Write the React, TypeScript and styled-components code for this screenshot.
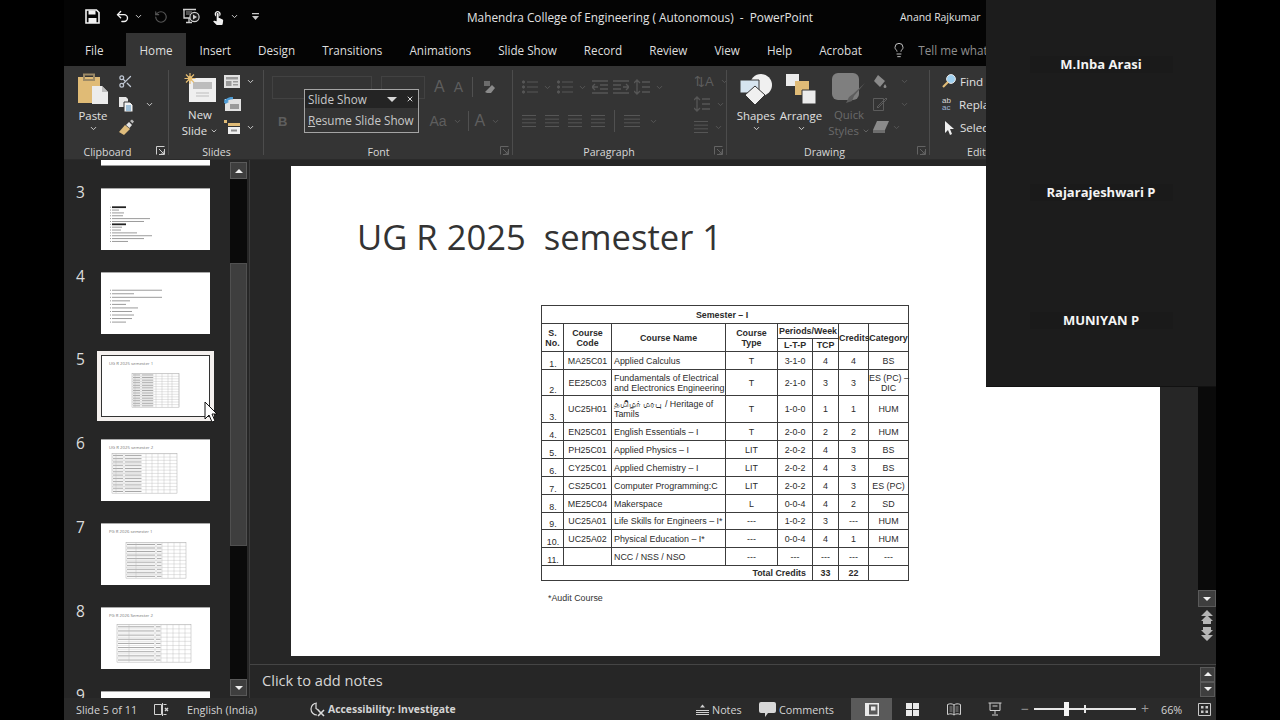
import { FC, ReactNode } from "react";
import styled, { createGlobalStyle } from "styled-components";
import { ChevronDown, Lightbulb, Scissors, Undo2, RotateCcw, X } from "lucide-react";
import { MdTouchApp } from "react-icons/md";

const UI_FONT = `"Open Sans", "Noto Sans", "Liberation Sans", sans-serif`;

const GlobalStyle = createGlobalStyle`
	html, body {
		margin: 0;
		padding: 0;
		background: #000;
		overflow: hidden;
	}
	* { box-sizing: border-box; }
`;

const Page = styled.div`
	position: relative;
	width: 1280px;
	height: 720px;
	padding: 0 64px;
	background: #000;
	overflow: hidden;
	font-family: ${UI_FONT};
	color: #e6e6e6;
`;

const AppWindow = styled.div`
	display: flex;
	flex-direction: column;
	width: 1152px;
	height: 720px;
	background: #262626;
`;

/* title bar */
const TitleBar = styled.div`
	display: flex;
	align-items: center;
	height: 33px;
	flex: none;
	padding-left: 21px;
	background: #040404;
`;

const Qat = styled.div`
	display: flex;
	align-items: center;
	width: 382px;
	flex: none;
`;

const QatSlot = styled.span<{ $w: number }>`
	display: inline-flex;
	align-items: center;
	width: ${p => p.$w}px;
	flex: none;
`;

const DocTitle = styled.div`
	width: 433px;
	flex: none;
	white-space: pre;
	font-size: 11.8px;
	color: #e2e2e2;
`;

const UserName = styled.div`
	font-size: 10.4px;
	color: #e2e2e2;
	white-space: nowrap;
`;

/* tab row */
const TabRow = styled.div`
	display: flex;
	align-items: stretch;
	height: 33px;
	flex: none;
	padding-left: 7.5px;
	background: #040404;
`;

const Tab = styled.div<{ $active?: boolean }>`
	display: flex;
	align-items: center;
	padding: 0 13.5px;
	margin-left: ${p => (p.$active ? "9px" : "0")};
	background: ${p => (p.$active ? "#343434" : "transparent")};
	font-size: 11.7px;
	color: #dedede;
	white-space: nowrap;
`;

const TellMe = styled.div`
	display: flex;
	align-items: center;
	gap: 11px;
	margin-left: 16px;
	font-size: 11.7px;
	color: #8f8f8f;
	white-space: nowrap;
`;

/* ribbon */
const Ribbon = styled.div`
	display: flex;
	height: 94px;
	flex: none;
	background: #343434;
	border-bottom: 1px solid #2a2a2a;
`;

const Group = styled.div<{ $w: number }>`
	position: relative;
	display: flex;
	flex-direction: column;
	width: ${p => p.$w}px;
	flex: none;
	&::after {
		content: "";
		position: absolute;
		right: 0;
		top: 4px;
		bottom: 4px;
		width: 1px;
		background: #4c4c4c;
	}
`;

const GroupBody = styled.div<{ $pl?: number }>`
	display: flex;
	flex: 1;
	padding-left: ${p => p.$pl ?? 0}px;
	min-height: 0;
`;

const GroupLabel = styled.div<{ $pr?: number; $pl?: number }>`
	height: 20px;
	flex: none;
	padding: 5px ${p => p.$pr ?? 0}px 0 ${p => p.$pl ?? 0}px;
	text-align: ${p => (p.$pl ? "left" : "center")};
	font-size: 10.6px;
	line-height: 16px;
	color: #d8d8d8;
`;

const Launcher = styled.svg<{ $dim?: boolean }>`
	position: absolute;
	right: 4px;
	bottom: 4px;
	width: 9px;
	height: 9px;
	opacity: ${p => (p.$dim ? 0.3 : 1)};
`;

const BigButton = styled.div<{ $w: number; $dim?: boolean }>`
	display: flex;
	flex-direction: column;
	align-items: center;
	width: ${p => p.$w}px;
	flex: none;
	padding-top: 6px;
	font-size: 11.4px;
	line-height: 16px;
	color: ${p => (p.$dim ? "#6a6a6a" : "#e0e0e0")};
	text-align: center;
	white-space: nowrap;
`;

const BigIcon = styled.div`
	height: 33px;
	margin-bottom: 3px;
	display: flex;
	align-items: center;
	justify-content: center;
`;

const SmallCol = styled.div<{ $w?: number; $pl?: number; $ml?: number }>`
	display: flex;
	flex-direction: column;
	justify-content: space-between;
	width: ${p => (p.$w ? `${p.$w}px` : "auto")};
	padding: 5px 0 2px ${p => p.$pl ?? 0}px;
	margin-left: ${p => p.$ml ?? 0}px;
	flex: none;
`;

const SmallRow = styled.div<{ $gap?: number }>`
	display: flex;
	align-items: center;
	gap: ${p => p.$gap ?? 3}px;
	height: 20px;
	font-size: 11.6px;
	color: #e0e0e0;
	white-space: nowrap;
`;

const FaintRow = styled.div<{ $gap?: number; $h?: number }>`
	display: flex;
	align-items: center;
	gap: ${p => p.$gap ?? 8}px;
	height: ${p => p.$h ?? 24}px;
	color: #5c5c5c;
`;

const FaintCol = styled.div<{ $w: number }>`
	display: flex;
	flex-direction: column;
	gap: 10px;
	width: ${p => p.$w}px;
	padding-top: 9px;
	flex: none;
`;

const FontBox = styled.div<{ $w: number }>`
	height: 23px;
	width: ${p => p.$w}px;
	border: 1px solid #424242;
	flex: none;
`;

const FaintText = styled.span<{ $size: number; $bold?: boolean }>`
	font-family: "Liberation Sans", sans-serif;
	font-size: ${p => p.$size}px;
	font-weight: ${p => (p.$bold ? 700 : 400)};
	color: #5e5e5e;
`;

const VRule = styled.span<{ $h: number }>`
	width: 1px;
	height: ${p => p.$h}px;
	background: #505050;
	flex: none;
`;

const Spacer = styled.span<{ $w: number }>`
	width: ${p => p.$w}px;
	flex: none;
`;

/* floating slide show toolbar */
const FloatBar = styled.div`
	position: absolute;
	left: 304px;
	top: 89px;
	width: 115px;
	height: 44px;
	background: #343434;
	border: 1px solid #a4a4a4;
	color: #c8c8c8;
	font-size: 11.7px;
`;

const FloatHead = styled.div`
	display: flex;
	align-items: center;
	height: 18px;
	padding: 0 4px 0 3px;
	background: #242424;
`;

const FloatTitle = styled.span`
	flex: 1;
`;

const FloatCaret = styled.span`
	width: 0;
	height: 0;
	margin-right: 9px;
	border-left: 5px solid transparent;
	border-right: 5px solid transparent;
	border-top: 5px solid #d8d8d8;
`;

const FloatItem = styled.div`
	padding: 4px 0 0 3px;
	white-space: nowrap;
	& u { text-underline-offset: 1px; }
`;

/* workspace */
const Workspace = styled.div`
	display: flex;
	flex: 1;
	min-height: 0;
`;

const ThumbPane = styled.div`
	display: flex;
	width: 186px;
	flex: none;
	background: #262626;
	border-right: 1px solid #3c3c3c;
`;

const ThumbList = styled.div`
	position: relative;
	flex: 1;
	overflow: hidden;
	display: flex;
	flex-direction: column;
	gap: 21.8px;
`;

const ThumbRow = styled.div`
	position: relative;
	display: flex;
	flex: none;
	height: 62px;
	padding-left: 12px;
`;

const ThumbNo = styled.div`
	width: 25px;
	flex: none;
	margin-top: -6px;
	font-size: 15.5px;
	line-height: 20px;
	color: #dcdcdc;
`;

const Thumb = styled.div<{ $selected?: boolean }>`
	position: relative;
	width: 109px;
	height: 62px;
	flex: none;
	background: #fff;
	border-top: 1px solid ${p => (p.$selected ? "#333" : "#a8a8a8")};
	outline: ${p => (p.$selected ? "1px solid #333" : "none")};
	outline-offset: -1px;
	box-shadow: ${p => (p.$selected ? "0 0 0 4px #f4f0ee" : "none")};
`;

const ThumbSvg = styled.svg`
	display: block;
	width: 100%;
	height: 100%;
`;

const PartialThumb = styled.div`
	width: 109px;
	height: 6px;
	margin-left: 37px;
	background: #fff;
	border-bottom: 1px solid #999;
	flex: none;
`;

const Cursor = styled.svg`
	position: absolute;
	left: 140px;
	top: 46px;
	width: 14px;
	height: 22px;
`;

const ScrollButton = styled.div<{ $up?: boolean }>`
	display: flex;
	align-items: center;
	justify-content: center;
	height: 17px;
	flex: none;
	background: #3e3e3e;
	border: 1px solid #5a5a5a;
	&::before {
		content: "";
		border-left: 4px solid transparent;
		border-right: 4px solid transparent;
		${p => (p.$up ? "border-bottom" : "border-top")}: 4px solid #f0f0f0;
	}
`;

const ScrollTrack = styled.div<{ $h?: number }>`
	height: ${p => (p.$h ? `${p.$h}px` : "auto")};
	flex: ${p => (p.$h ? "none" : "1")};
	background: #0a0a0a;
`;

const ScrollThumb = styled.div<{ $h: number }>`
	height: ${p => p.$h}px;
	flex: none;
	background: #3e3e3e;
	border: 1px solid #505050;
`;

const ThumbScrollWrap = styled.div`
	display: flex;
	flex-direction: column;
	width: 17px;
	margin: 2px 2px 2px 0;
	flex: none;
`;

const MainColumn = styled.div`
	display: flex;
	flex-direction: column;
	flex: 1;
	min-width: 0;
`;

const EditorRow = styled.div`
	display: flex;
	flex: 1;
	min-height: 0;
`;

const Editor = styled.div`
	flex: 1;
	padding: 6px 0 0 41px;
`;

const Slide = styled.div`
	width: 869px;
	height: 490px;
	background: #fff;
	padding: 47px 0 0 66px;
`;

const SlideTitle = styled.h1`
	margin: 0;
	font-family: "Open Sans", sans-serif;
	font-weight: 400;
	font-size: 34.6px;
	line-height: 48px;
	color: #333;
	white-space: pre;
`;

const TableWrap = styled.div`
	margin: 44px 0 0 184px;
	width: 367px;
`;

const CourseTable = styled.table`
	border-collapse: collapse;
	table-layout: fixed;
	width: 367px;
	font-family: "Liberation Sans", sans-serif;
	font-size: 8.9px;
	line-height: 10px;
	color: #2b2b2b;
`;

const TableCol = styled.col<{ $w: number }>`
	width: ${p => p.$w}px;
`;

const TableRow = styled.tr<{ $h: number }>`
	height: ${p => p.$h}px;
`;

const Cell = styled.td<{ $bold?: boolean; $left?: boolean; $no?: boolean; $right?: boolean; $pr?: number }>`
	border: 1px solid #3c3c3c;
	padding: ${p => (p.$no ? "0 0 0 1px" : p.$left ? "0 0 0 2px" : p.$right ? "0 6px 0 0" : `0 ${p.$pr ?? 0}px 0 0`)};
	text-align: ${p => (p.$left ? "left" : p.$right ? "right" : "center")};
	vertical-align: ${p => (p.$no ? "bottom" : "middle")};
	font-weight: ${p => (p.$bold ? 700 : 400)};
	overflow: visible;
	white-space: nowrap;
`;

const AuditNote = styled.div`
	margin: 12px 0 0 7px;
	font-family: "Liberation Sans", sans-serif;
	font-size: 8.9px;
	color: #333;
`;

const EditorScroll = styled.div`
	display: flex;
	flex-direction: column;
	width: 18px;
	padding-bottom: 23px;
	flex: none;
`;

const StepArrow = styled.svg`
	display: block;
	width: 14px;
	height: 14px;
	margin: 3px 0 0 2px;
	flex: none;
`;

const NotesBar = styled.div`
	display: flex;
	align-items: center;
	height: 34px;
	flex: none;
	padding-left: 12px;
	border-top: 1px solid #454545;
	font-size: 14.6px;
	color: #d6d6d6;
`;

const NotesText = styled.div`
	flex: 1;
	padding-bottom: 4px;
`;

const NotesScroll = styled.div`
	display: flex;
	flex-direction: column;
	width: 15px;
	margin-right: 1px;
	flex: none;
	& > div { height: 15px; }
`;

/* status bar */
const StatusBar = styled.div`
	display: flex;
	align-items: center;
	height: 22px;
	flex: none;
	background: #2a2a2a;
	font-size: 10.8px;
	color: #d4d4d4;
	white-space: nowrap;
`;

const StatusItem = styled.div<{ $w: number; $bold?: boolean; $gap?: number; $ml?: number }>`
	display: flex;
	align-items: center;
	gap: ${p => p.$gap ?? 3}px;
	width: ${p => p.$w}px;
	margin-left: ${p => p.$ml ?? 0}px;
	flex: none;
	font-size: ${p => (p.$bold ? "10.4px" : "inherit")};
	font-weight: ${p => (p.$bold ? 700 : 400)};
`;

const ViewButton = styled.div<{ $active?: boolean }>`
	display: flex;
	align-items: center;
	justify-content: center;
	width: 41px;
	height: 22px;
	flex: none;
	background: ${p => (p.$active ? "#5a5a5a" : "transparent")};
`;

const ZoomSlider = styled.div`
	position: relative;
	width: 102px;
	height: 2px;
	margin: 0 4px;
	background: #e6e6e6;
	flex: none;
`;

const ZoomMark = styled.span`
	position: absolute;
	left: 50px;
	top: -3px;
	width: 2px;
	height: 8px;
	background: #e6e6e6;
`;

const ZoomKnob = styled.span`
	position: absolute;
	left: 30px;
	top: -6px;
	width: 5px;
	height: 14px;
	background: #f4f4f4;
`;

const ZoomSign = styled.span<{ $ml?: number }>`
	width: 10px;
	margin-left: ${p => p.$ml ?? 0}px;
	font-size: 14px;
	line-height: 14px;
	color: #9a9a9a;
	text-align: center;
	flex: none;
`;

/* meeting panel over the window */
const ParticipantPanel = styled.div`
	position: absolute;
	left: 986px;
	top: 0;
	width: 230px;
	height: 387px;
	display: flex;
	flex-direction: column;
	padding-bottom: 2px;
	background: #1c1c1c;
	border-bottom: 1px solid #111;
`;

const ParticipantTile = styled.div`
	display: flex;
	flex: 1;
	align-items: center;
	justify-content: center;
`;

const ParticipantName = styled.div`
	width: 143px;
	height: 17px;
	line-height: 17px;
	background: #1a1a1a;
	text-align: center;
	font-size: 13px;
	font-weight: 700;
	color: #f4f4f4;
	white-space: nowrap;
`;

const IndentSvg = styled.svg<{ $flip?: boolean }>`
	transform: ${p => (p.$flip ? "scaleX(-1)" : "none")};
`;

const ReplaceGlyph = styled.span`
	display: inline-block;
	width: 14px;
	font-family: "Liberation Sans", sans-serif;
	font-size: 8px;
	line-height: 7px;
	color: #d8d8d8;
	& i { color: #9fb6d8; font-style: normal; }
`;

const Chevron: FC<{ color?: string; size?: number }> = ({ color = "#cfcfcf", size = 9 }) => (
	<ChevronDown size={size} color={color} strokeWidth={2.6} />
);

const DIM = "#565656";

const LauncherIcon: FC<{ dim?: boolean }> = ({ dim }) => (
	<Launcher $dim={dim} viewBox="0 0 9 9" fill="none" stroke="#cfcfcf">
		<path d="M.5 8.500v-8h8M8.500 3v5.500H3M3 3l5 5M5 8h3V5" />
	</Launcher>
);

const LinesIcon: FC<{ w?: number; rows?: number }> = ({ w = 14, rows = 4 }) => (
	<svg width={w} height={14} viewBox={`0 0 ${w} 14`} stroke={DIM}>
		{Array.from({ length: rows }).map((_, i) => (
			<path key={i} d={`M0 ${1.5 + (i * 11) / (rows - 1)}H${w}`} />
		))}
	</svg>
);

const ListIcon: FC = () => (
	<svg width={16} height={14} viewBox="0 0 16 14" fill={DIM} stroke={DIM}>
		<circle cx="1.500" cy="2" r="1.200" />
		<circle cx="1.500" cy="7" r="1.200" />
		<circle cx="1.500" cy="12" r="1.200" />
		<path d="M5 2h11M5 7h11M5 12h11" />
	</svg>
);

const IndentIcon: FC<{ flip?: boolean }> = ({ flip }) => (
	<IndentSvg $flip={flip} width={16} height={14} viewBox="0 0 16 14" fill="none" stroke={DIM}>
		<path d="M0 1h16M8 5h8M8 9h8M0 13h16M6 7H0M3 4 0 7l3 3" strokeWidth="1.300" />
	</IndentSvg>
);

const SpacingIcon: FC = () => (
	<svg width={16} height={16} viewBox="0 0 16 16" fill="none" stroke={DIM} strokeWidth="1.300">
		<path d="M3 1v14M0 4l3-3 3 3M0 12l3 3 3-3M8 3h8M8 8h8M8 13h8" />
	</svg>
);

const EraserIcon: FC = () => (
	<svg width={14} height={14} viewBox="0 0 14 14">
		<path d="M2 1h6v5H2z" fill="#6b6b6b" />
		<path d="M3 12 10 5l3 3-4 5H5z" fill="#8a8a8a" />
	</svg>
);

const SaveIcon: FC = () => (
	<svg width={15} height={15} viewBox="0 0 15 15">
		<path d="M1 1h10.500L14 3.500V14H1z" fill="none" stroke="#f2f2f2" strokeWidth="1.600" />
		<path d="M3.500 1.500h7v4h-7z" fill="#f2f2f2" />
		<path d="M3.500 9h8v5h-8z" fill="#f2f2f2" />
	</svg>
);

const ShowFromStart: FC = () => (
	<svg width={18} height={18} viewBox="0 0 18 18" fill="none" stroke="#d0d0d0">
		<path d="M1 1.500h13M2 1.500V10h6M7 10v4M4 14.500h6" strokeWidth="1.300" />
		<path d="M4 4h6M4 6h4" stroke="#9a9a9a" />
		<circle cx="12.500" cy="9" r="4.600" fill="#1a1a1a" strokeWidth="1.200" />
		<path d="M11 6.500v5l4-2.500z" fill="#d0d0d0" stroke="none" />
	</svg>
);

const QatMoreIcon: FC = () => (
	<svg width={7} height={8} viewBox="0 0 7 8" fill="#c8c8c8">
		<path d="M0 0h7v1.200H0zM0 3h7L3.500 7z" />
	</svg>
);

const PasteIcon: FC = () => (
	<svg width={32} height={32} viewBox="0 0 32 32">
		<path d="M1 4h22v26H1z" fill="#e0bb76" />
		<path d="M7 1.500h10V7H7z" fill="none" stroke="#9d8a66" strokeWidth="2" />
		<path d="M15 13h10l6 6v12H15z" fill="#ececec" />
		<path d="M25 13v6h6z" fill="#bdbdbd" />
	</svg>
);

const CopyIcon: FC = () => (
	<svg width={16} height={16} viewBox="0 0 16 16">
		<path d="M1 1h7l2 2v8H1z" fill="#e6e6e6" />
		<path d="M6 6h6l3 3v7H6z" fill="#f2f2f2" stroke="#343434" />
		<path d="M8 10h5M8 12h5M8 14h5" stroke="#4d8dbd" />
	</svg>
);

const BrushIcon: FC = () => (
	<svg width={17} height={17} viewBox="0 0 17 17">
		<path d="M1 13 7 6l5 4-6 6z" fill="#dfbc7c" />
		<path d="M8 6l3-3 3 3-2.500 3z" fill="#e4e4e4" />
		<path d="M12 2l2-1.500 2 2-1.500 2z" fill="#b9b9b9" />
	</svg>
);

const NewSlideIcon: FC = () => (
	<svg width={33} height={30} viewBox="0 0 33 30">
		<path d="M5 5h27v24H5z" fill="#efefef" />
		<path d="M9 9h19v7H9z" fill="#bdbdbd" />
		<path d="M12 20h13M12 23h13" stroke="#bdbdbd" />
		<g stroke="#e5bd72" strokeWidth="1.200">
			<path d="M6 0v11M0.500 5.500h11M2 1.500l8 8M10 1.500l-8 8" />
		</g>
		<circle cx="6" cy="5.500" r="2.400" fill="#e5bd72" />
	</svg>
);

const LayoutIcon: FC = () => (
	<svg width={16} height={13} viewBox="0 0 16 13">
		<path d="M0 0h16v13H0z" fill="#e2e2e2" />
		<path d="M2 2h12v2.500H2zM2 6h5.500v5H2zM9 6h5v1.500H9zM9 9h5v1.500H9z" fill="#9a9a9a" />
	</svg>
);

const ResetIcon: FC = () => (
	<svg width={17} height={14} viewBox="0 0 17 14">
		<path d="M1 2h16v12H1z" fill="#e2e2e2" />
		<path d="M6 7h9v5H6z" fill="#9a9a9a" />
		<path d="M1 6c1-3 4-5 8-5" stroke="#4d9bd4" strokeWidth="2.400" fill="none" />
		<path d="M0 2l1 5 4-2z" fill="#4d9bd4" />
	</svg>
);

const SectionIcon: FC = () => (
	<svg width={16} height={14} viewBox="0 0 16 14">
		<path d="M4 3h12v3H4z" fill="#e0bb76" />
		<path d="M4 7h12v7H4z" fill="#efefef" />
		<path d="M7 9.500h6v2H7z" fill="#8d8d8d" />
		<path d="M0 0h3v3H0z" fill="#e0bb76" />
	</svg>
);

const ShapesIcon: FC = () => (
	<svg width={34} height={32} viewBox="0 0 34 32">
		<circle cx="22" cy="12" r="11" fill="#f0f0f0" />
		<path d="M1 7h19v13H1z" fill="#d6e4ef" stroke="#343434" />
		<path d="M16 13l10 9-10 10-10-10z" fill="#f0f0f0" stroke="#343434" />
	</svg>
);

const ArrangeIcon: FC = () => (
	<svg width={30} height={30} viewBox="0 0 30 30">
		<path d="M0 0h13v12H0z" fill="#ececec" />
		<path d="M9 7h14v14H9z" fill="#e0bb76" />
		<path d="M16 16h14v14H16z" fill="#ececec" stroke="#343434" />
	</svg>
);

const QuickStylesIcon: FC = () => (
	<svg width={34} height={32} viewBox="0 0 34 32">
		<rect x="0" y="1" width="27" height="27" rx="6" fill="#7f7f7f" />
		<path d="M33 11 22 24l-2 5-6 2 3-6 4-3z" fill="#5e5e5e" />
	</svg>
);

const FindIcon: FC = () => (
	<svg width={14} height={14} viewBox="0 0 14 14">
		<circle cx="9" cy="5" r="4.400" fill="#9fd0f0" stroke="#e8e8e8" />
		<path d="M6 8 1 13" stroke="#e0bb76" strokeWidth="2.200" />
	</svg>
);

const SelectIcon: FC = () => (
	<svg width={14} height={15} viewBox="0 0 14 15">
		<path d="M3 1v12l3-3 2 5 2-1-2-5h4z" fill="#efefef" />
	</svg>
);

const BucketIcon: FC = () => (
	<svg width={14} height={14} viewBox="0 0 14 14" fill="#8a8a8a">
		<path d="M5 1l7 6-5 6-6-6zM12 10l1.500 2.500a1.500 1.500 0 1 1-3 0z" />
	</svg>
);

const OutlineIcon: FC = () => (
	<svg width={15} height={14} viewBox="0 0 15 14" fill="none" stroke="#5c5c5c">
		<path d="M.500 1.500h10v12H.500zM4 10l9-9 1 1-9 9z" />
	</svg>
);

const EffectIcon: FC = () => (
	<svg width={16} height={14} viewBox="0 0 16 14" fill="#8a8a8a">
		<path d="M4 1h12L12 10H0z" />
		<path d="M0 10h12v3H0z" fill="#6d6d6d" />
	</svg>
);

const NotesIcon: FC = () => (
	<svg width={13} height={11} viewBox="0 0 13 11" fill="none" stroke="#d0d0d0">
		<path d="M0 6.500h13M0 8.500h13M0 10.500h13" />
		<path d="M4 3.500l2.500-3 2.500 3z" fill="#d0d0d0" stroke="none" />
	</svg>
);

const CommentIcon: FC = () => (
	<svg width={17} height={15} viewBox="0 0 17 15">
		<path d="M2 0h13a2 2 0 0 1 2 2v7a2 2 0 0 1-2 2H9l-3 4v-4H2a2 2 0 0 1-2-2V2a2 2 0 0 1 2-2z" fill="#d8d8d8" />
	</svg>
);

const SpellIcon: FC = () => (
	<svg width={15} height={13} viewBox="0 0 15 13" fill="none" stroke="#d4d4d4">
		<path d="M.500 1.500h7v10h-7zM9.500 1.500h3M9.500 11.500h3M8.500 0v13" />
		<path d="M11 5l3 3M14 5l-3 3" strokeWidth="1.400" />
	</svg>
);

const AccessIcon: FC = () => (
	<svg width={16} height={15} viewBox="0 0 16 15" fill="none" stroke="#dadada" strokeWidth="1.200">
		<path d="M7 1a6 6 0 1 0 0 12" />
		<path d="M6 1.500v5l3 2" />
		<path d="M8 8l6 6M14 8l-6 6" strokeWidth="1.600" />
	</svg>
);

const NormalViewIcon: FC = () => (
	<svg width={14} height={13} viewBox="0 0 14 13">
		<path d="M0 0h14v13H0z" fill="#eaeaea" />
		<path d="M4 1.500h8.500v10H4z" fill="#5a5a5a" />
		<path d="M6 3.500h4.500v4H6z" fill="#eaeaea" />
	</svg>
);

const SorterIcon: FC = () => (
	<svg width={13} height={13} viewBox="0 0 13 13" fill="#eaeaea">
		<path d="M0 0h6v6H0zM7 0h6v6H7zM0 7h6v6H0zM7 7h6v6H7z" />
	</svg>
);

const ReadingIcon: FC = () => (
	<svg width={14} height={13} viewBox="0 0 14 13" fill="none" stroke="#cfcfcf">
		<path d="M.500 1.500C3 .500 5 .500 7 2c2-1.500 4-1.500 6.500-.500v10C11 10.500 9 10.500 7 12c-2-1.500-4-1.500-6.500-.500zM7 2v10" />
		<path d="M2.500 4h3M2.500 6h3M2.500 8h3M8.500 4h3M8.500 6h3M8.500 8h3" stroke="#8a8a8a" />
	</svg>
);

const ShowIcon: FC = () => (
	<svg width={14} height={14} viewBox="0 0 14 14" fill="none" stroke="#cfcfcf">
		<path d="M.500 1h13M2 1v7.500h10V1M7 8.500V12M4 13h6M4.500 4h5" />
	</svg>
);

const FitIcon: FC = () => (
	<svg width={13} height={13} viewBox="0 0 13 13" fill="none" stroke="#c8c8c8">
		<path d="M.500.500h12v12H.500z" />
		<path d="M3 3h2.500v2.500H3zM7.500 3H10v2.500H7.500zM3 7.500h2.500V10H3zM7.500 7.500H10V10H7.500z" fill="#c8c8c8" stroke="none" />
	</svg>
);

type MiniTable = { x: number; y: number; w: number; h: number; rows: number; cols: number[] };

type MiniThumb = {
	no: number;
	title?: string;
	lines?: { y: number; w: number; heading?: boolean }[];
	table?: MiniTable;
	selected?: boolean;
};

const lineRows = (widths: number[], start: number, pitch: number, heads: number[] = []) =>
	widths.map((w, i) => ({ y: start + i * pitch, w, heading: heads.includes(i) }));

const THUMBS: MiniThumb[] = [
	{ no: 3, lines: lineRows([14, 7, 12, 11, 38, 32, 14, 10, 9, 25, 40, 32, 16], 18, 2.9, [0, 6]) },
	{ no: 4, lines: lineRows([50, 22, 50, 18, 14, 26, 20, 22, 20, 14], 17, 3.6) },
	{ no: 5, title: "UG R 2025  semester 1", selected: true, table: { x: 31, y: 18, w: 47, h: 34, rows: 13, cols: [3, 9, 24, 30, 36, 40, 47] } },
	{ no: 6, title: "UG R 2025  semester 2", table: { x: 11, y: 14, w: 65, h: 40, rows: 12, cols: [4, 12, 34, 40, 46, 52, 58] } },
	{ no: 7, title: "PG R 2026 semester 1", table: { x: 25, y: 19, w: 60, h: 36, rows: 10, cols: [10, 30, 36, 42, 48, 54] } },
	{ no: 8, title: "PG R 2026 Semester 2", table: { x: 16, y: 17, w: 74, h: 38, rows: 9, cols: [12, 38, 44, 50, 56, 62, 68] } },
	{ no: 9 },
];

const MiniGrid: FC<{ t: MiniTable }> = ({ t }) => (
	<g fill="none" stroke="#bbb" strokeWidth="0.400">
		<rect x={t.x} y={t.y} width={t.w} height={t.h} stroke="#999" />
		{Array.from({ length: t.rows }).map((_, i) => {
			const y = t.y + (i * t.h) / t.rows;
			const mid = t.y + ((i + 0.5) * t.h) / t.rows;
			return (
				<g key={i}>
					<path d={`M${t.x} ${y}h${t.w}`} />
					<path
						d={`M${t.x + 1} ${mid}h${t.cols[1] - 2}M${t.x + t.cols[1] + 1} ${mid}h${(t.cols[2] - t.cols[1]) * 0.75}`}
						stroke="#8f8f8f"
						strokeWidth="0.800"
					/>
				</g>
			);
		})}
		{t.cols.map(c => (
			<path key={c} d={`M${t.x + c} ${t.y}v${t.h}`} />
		))}
	</g>
);

const MiniSlide: FC<{ t: MiniThumb }> = ({ t }) => (
	<ThumbSvg viewBox="0 0 109 62" preserveAspectRatio="none">
		{t.title && (
			<text x="8" y="9.500" fontSize="4.300" fontFamily="Open Sans, sans-serif" fill="#777">
				{t.title}
			</text>
		)}
		{t.lines?.map((l, i) => (
			<g key={i}>
				<rect x="9" y={l.y} width="1" height="1" fill="#999" />
				<rect
					x="11"
					y={l.y - (l.heading ? 0.4 : 0)}
					width={l.w}
					height={l.heading ? 1.8 : 1}
					fill={l.heading ? "#222" : "#9a9a9a"}
				/>
			</g>
		))}
		{t.table && <MiniGrid t={t.table} />}
	</ThumbSvg>
);

type Course = { no: string; code: string; name: ReactNode; type: string; ltp: string; tcp: string; cr: string; cat: ReactNode; h: number };

const COURSES: Course[] = [
	{ no: "1.", code: "MA25C01", name: "Applied Calculus", type: "T", ltp: "3-1-0", tcp: "4", cr: "4", cat: "BS", h: 18 },
	{ no: "2.", code: "EE25C03", name: <>Fundamentals of Electrical<br />and Electronics Engineering</>, type: "T", ltp: "2-1-0", tcp: "3", cr: "3", cat: <>ES (PC) –<br />DIC</>, h: 26 },
	{ no: "3.", code: "UC25H01", name: <>தமிழர் மரபு / Heritage of<br />Tamils</>, type: "T", ltp: "1-0-0", tcp: "1", cr: "1", cat: "HUM", h: 27 },
	{ no: "4.", code: "EN25C01", name: "English Essentials – I", type: "T", ltp: "2-0-0", tcp: "2", cr: "2", cat: "HUM", h: 18 },
	{ no: "5.", code: "PH25C01", name: "Applied Physics – I", type: "LIT", ltp: "2-0-2", tcp: "4", cr: "3", cat: "BS", h: 18 },
	{ no: "6.", code: "CY25C01", name: "Applied Chemistry – I", type: "LIT", ltp: "2-0-2", tcp: "4", cr: "3", cat: "BS", h: 18 },
	{ no: "7.", code: "CS25C01", name: "Computer Programming:C", type: "LIT", ltp: "2-0-2", tcp: "4", cr: "3", cat: "ES (PC)", h: 18 },
	{ no: "8.", code: "ME25C04", name: "Makerspace", type: "L", ltp: "0-0-4", tcp: "4", cr: "2", cat: "SD", h: 18 },
	{ no: "9.", code: "UC25A01", name: "Life Skills for Engineers – I*", type: "---", ltp: "1-0-2", tcp: "3", cr: "---", cat: "HUM", h: 17 },
	{ no: "10.", code: "UC25A02", name: "Physical Education – I*", type: "---", ltp: "0-0-4", tcp: "4", cr: "1", cat: "HUM", h: 18 },
	{ no: "11.", code: "", name: "NCC / NSS / NSO", type: "---", ltp: "---", tcp: "---", cr: "---", cat: "---", h: 18 },
];

const COLS = [22, 48, 114, 52, 35, 26, 30, 40];
const TABS = ["Insert", "Design", "Transitions", "Animations", "Slide Show", "Record", "Review", "View", "Help", "Acrobat"];
const PEOPLE = ["M.Inba Arasi", "Rajarajeshwari P", "MUNIYAN P"];

export default function App() {
	return (
		<Page>
			<GlobalStyle />
			<AppWindow>
				<TitleBar>
					<Qat>
						<QatSlot $w={30}><SaveIcon /></QatSlot>
						<QatSlot $w={19}><Undo2 size={15} color="#f2f2f2" strokeWidth={2.2} /></QatSlot>
						<QatSlot $w={20}><Chevron /></QatSlot>
						<QatSlot $w={28}><RotateCcw size={14} color="#555" /></QatSlot>
						<QatSlot $w={28}><ShowFromStart /></QatSlot>
						<QatSlot $w={20}><MdTouchApp size={16} color="#efefef" /></QatSlot>
						<QatSlot $w={22}><Chevron /></QatSlot>
						<QatSlot $w={10}><QatMoreIcon /></QatSlot>
					</Qat>
					<DocTitle>{"Mahendra College of Engineering ( Autonomous)  -  PowerPoint"}</DocTitle>
					<UserName>Anand Rajkumar</UserName>
				</TitleBar>

				<TabRow>
					<Tab>File</Tab>
					<Tab $active>Home</Tab>
					{TABS.map(t => <Tab key={t}>{t}</Tab>)}
					<TellMe>
						<Lightbulb size={16} color="#cfcfcf" strokeWidth={1.4} />
						Tell me what
					</TellMe>
				</TabRow>

				<Ribbon>
					<Group $w={105}>
						<GroupBody $pl={12}>
							<BigButton $w={34}>
								<BigIcon><PasteIcon /></BigIcon>
								Paste
								<Chevron />
							</BigButton>
							<SmallCol $w={44} $pl={8}>
								<SmallRow><Scissors size={15} color="#c0c8d4" /></SmallRow>
								<SmallRow $gap={11}><CopyIcon /><Chevron /></SmallRow>
								<SmallRow><BrushIcon /></SmallRow>
							</SmallCol>
						</GroupBody>
						<GroupLabel $pr={18}>Clipboard</GroupLabel>
						<LauncherIcon />
					</Group>

					<Group $w={95}>
						<GroupBody $pl={12}>
							<BigButton $w={38}>
								<BigIcon><NewSlideIcon /></BigIcon>
								New
								<span>Slide <Chevron size={8} /></span>
							</BigButton>
							<SmallCol $w={36} $pl={5}>
								<SmallRow $gap={6}><LayoutIcon /><Chevron /></SmallRow>
								<SmallRow><ResetIcon /></SmallRow>
								<SmallRow $gap={6}><SectionIcon /><Chevron /></SmallRow>
							</SmallCol>
						</GroupBody>
						<GroupLabel>Slides</GroupLabel>
					</Group>

					<Group $w={249}>
						<GroupBody $pl={8}>
							<FaintCol $w={236}>
								<FaintRow $gap={9}>
									<FontBox $w={100} />
									<FontBox $w={44} />
									<FaintText $size={16}>A</FaintText>
									<FaintText $size={14}>A</FaintText>
									<VRule $h={20} />
									<EraserIcon />
								</FaintRow>
								<FaintRow $gap={6}>
									<Spacer $w={0} />
									<FaintText $size={13} $bold>B</FaintText>
									<Spacer $w={130} />
									<FaintText $size={14}>Aa</FaintText>
									<Chevron color={DIM} />
									<VRule $h={20} />
									<FaintText $size={16}>A</FaintText>
									<Chevron color={DIM} />
								</FaintRow>
							</FaintCol>
						</GroupBody>
						<GroupLabel $pr={20}>Font</GroupLabel>
						<LauncherIcon dim />
					</Group>

					<Group $w={214}>
						<GroupBody $pl={9}>
							<FaintCol $w={160}>
								<FaintRow $gap={5}>
									<ListIcon /><Chevron color={DIM} />
									<ListIcon /><Chevron color={DIM} />
									<IndentIcon /><IndentIcon flip />
									<SpacingIcon /><Chevron color={DIM} />
								</FaintRow>
								<FaintRow $gap={9}>
									<LinesIcon /><LinesIcon /><LinesIcon /><LinesIcon />
									<VRule $h={22} />
									<LinesIcon w={16} /><Chevron color={DIM} />
								</FaintRow>
							</FaintCol>
							<SmallCol $ml={12}>
								<SmallRow $gap={6}><FaintText $size={13}>⇅A</FaintText><Chevron color={DIM} /></SmallRow>
								<SmallRow $gap={6}><SpacingIcon /><Chevron color={DIM} /></SmallRow>
								<SmallRow $gap={6}><LinesIcon /><Chevron color={DIM} /></SmallRow>
							</SmallCol>
						</GroupBody>
						<GroupLabel $pr={22}>Paragraph</GroupLabel>
						<LauncherIcon dim />
					</Group>

					<Group $w={203}>
						<GroupBody $pl={8}>
							<BigButton $w={42}>
								<BigIcon><ShapesIcon /></BigIcon>
								Shapes
								<Chevron />
							</BigButton>
							<BigButton $w={48}>
								<BigIcon><ArrangeIcon /></BigIcon>
								Arrange
								<Chevron />
							</BigButton>
							<BigButton $w={48} $dim>
								<BigIcon><QuickStylesIcon /></BigIcon>
								Quick
								<span>Styles <Chevron size={8} color="#6a6a6a" /></span>
							</BigButton>
							<SmallCol>
								<SmallRow $gap={13}><BucketIcon /><Chevron color={DIM} /></SmallRow>
								<SmallRow $gap={12}><OutlineIcon /><Chevron color={DIM} /></SmallRow>
								<SmallRow $gap={3}><EffectIcon /><Chevron color={DIM} /></SmallRow>
							</SmallCol>
						</GroupBody>
						<GroupLabel $pr={8}>Drawing</GroupLabel>
						<LauncherIcon dim />
					</Group>

					<Group $w={120}>
						<GroupBody $pl={12}>
							<SmallCol>
								<SmallRow $gap={4}><FindIcon />Find</SmallRow>
								<SmallRow $gap={3}><ReplaceGlyph>ab<br /><i>ac</i></ReplaceGlyph>Replace</SmallRow>
								<SmallRow $gap={4}><SelectIcon />Select</SmallRow>
							</SmallCol>
						</GroupBody>
						<GroupLabel $pl={37}>Editing</GroupLabel>
					</Group>
				</Ribbon>

				<Workspace>
					<ThumbPane>
						<ThumbList>
							<PartialThumb />
							{THUMBS.map(t => (
								<ThumbRow key={t.no}>
									<ThumbNo>{t.no}</ThumbNo>
									<Thumb $selected={t.selected}>
										<MiniSlide t={t} />
									</Thumb>
									{t.selected && (
										<Cursor viewBox="0 0 14 22">
											<path d="M1 1v17l4-4 3 7 3-1-3-7h5z" fill="#fff" stroke="#111" strokeWidth="1" />
										</Cursor>
									)}
								</ThumbRow>
							))}
						</ThumbList>
						<ThumbScrollWrap>
							<ScrollButton $up />
							<ScrollTrack $h={84} />
							<ScrollThumb $h={283} />
							<ScrollTrack />
							<ScrollButton />
						</ThumbScrollWrap>
					</ThumbPane>

					<MainColumn>
						<EditorRow>
							<Editor>
								<Slide>
									<SlideTitle>{"UG R 2025  semester 1"}</SlideTitle>
									<TableWrap>
										<CourseTable>
											<colgroup>
												{COLS.map((w, i) => <TableCol key={i} $w={w} />)}
											</colgroup>
											<tbody>
												<TableRow $h={18}>
													<Cell as="th" $bold $pr={6} colSpan={8}>Semester – I</Cell>
												</TableRow>
												<TableRow $h={15}>
													<Cell as="th" $bold rowSpan={2}>S.<br />No.</Cell>
													<Cell as="th" $bold rowSpan={2}>Course<br />Code</Cell>
													<Cell as="th" $bold rowSpan={2}>Course Name</Cell>
													<Cell as="th" $bold rowSpan={2}>Course<br />Type</Cell>
													<Cell as="th" $bold colSpan={2}>Periods/Week</Cell>
													<Cell as="th" $bold rowSpan={2}>Credits</Cell>
													<Cell as="th" $bold rowSpan={2}>Category</Cell>
												</TableRow>
												<TableRow $h={13}>
													<Cell as="th" $bold>L-T-P</Cell>
													<Cell as="th" $bold>TCP</Cell>
												</TableRow>
												{COURSES.map(c => (
													<TableRow key={c.no} $h={c.h}>
														<Cell $no>{c.no}</Cell>
														<Cell>{c.code}</Cell>
														<Cell $left>{c.name}</Cell>
														<Cell>{c.type}</Cell>
														<Cell>{c.ltp}</Cell>
														<Cell>{c.tcp}</Cell>
														<Cell>{c.cr}</Cell>
														<Cell>{c.cat}</Cell>
													</TableRow>
												))}
												<TableRow $h={15}>
													<Cell $bold $right colSpan={5}>Total Credits</Cell>
													<Cell $bold>33</Cell>
													<Cell $bold>22</Cell>
													<Cell />
												</TableRow>
											</tbody>
										</CourseTable>
										<AuditNote>*Audit Course</AuditNote>
									</TableWrap>
								</Slide>
							</Editor>
							<EditorScroll>
								<ScrollTrack />
								<ScrollButton />
								<StepArrow viewBox="0 0 14 14" fill="#b5b5b5">
									<path d="M7 0 13 6H1zM7 5l6 6H1zM3 11h8v3H3z" />
								</StepArrow>
								<StepArrow viewBox="0 0 14 14" fill="#b5b5b5">
									<path d="M3 0h8v3H3zM1 3h12L7 9zM1 8h12l-6 6z" />
								</StepArrow>
							</EditorScroll>
						</EditorRow>

						<NotesBar>
							<NotesText>Click to add notes</NotesText>
							<NotesScroll>
								<ScrollButton $up />
								<ScrollButton />
							</NotesScroll>
						</NotesBar>
					</MainColumn>
				</Workspace>

				<StatusBar>
					<StatusItem $w={78} $ml={12}>Slide 5 of 11</StatusItem>
					<StatusItem $w={33}><SpellIcon /></StatusItem>
					<StatusItem $w={123}>English (India)</StatusItem>
					<StatusItem $w={386} $bold $gap={2}><AccessIcon />Accessibility: Investigate</StatusItem>
					<StatusItem $w={63}><NotesIcon />Notes</StatusItem>
					<StatusItem $w={92}><CommentIcon />Comments</StatusItem>
					<ViewButton $active><NormalViewIcon /></ViewButton>
					<ViewButton><SorterIcon /></ViewButton>
					<ViewButton><ReadingIcon /></ViewButton>
					<ViewButton><ShowIcon /></ViewButton>
					<ZoomSign $ml={5}>−</ZoomSign>
					<ZoomSlider><ZoomMark /><ZoomKnob /></ZoomSlider>
					<ZoomSign>+</ZoomSign>
					<StatusItem $w={37} $ml={11}>66%</StatusItem>
					<FitIcon />
				</StatusBar>
			</AppWindow>

			<FloatBar>
				<FloatHead>
					<FloatTitle>Slide Show</FloatTitle>
					<FloatCaret />
					<X size={8} color="#d8d8d8" strokeWidth={3} />
				</FloatHead>
				<FloatItem><u>R</u>esume Slide Show</FloatItem>
			</FloatBar>

			<ParticipantPanel>
				{PEOPLE.map(p => (
					<ParticipantTile key={p}>
						<ParticipantName>{p}</ParticipantName>
					</ParticipantTile>
				))}
			</ParticipantPanel>
		</Page>
	);
}
